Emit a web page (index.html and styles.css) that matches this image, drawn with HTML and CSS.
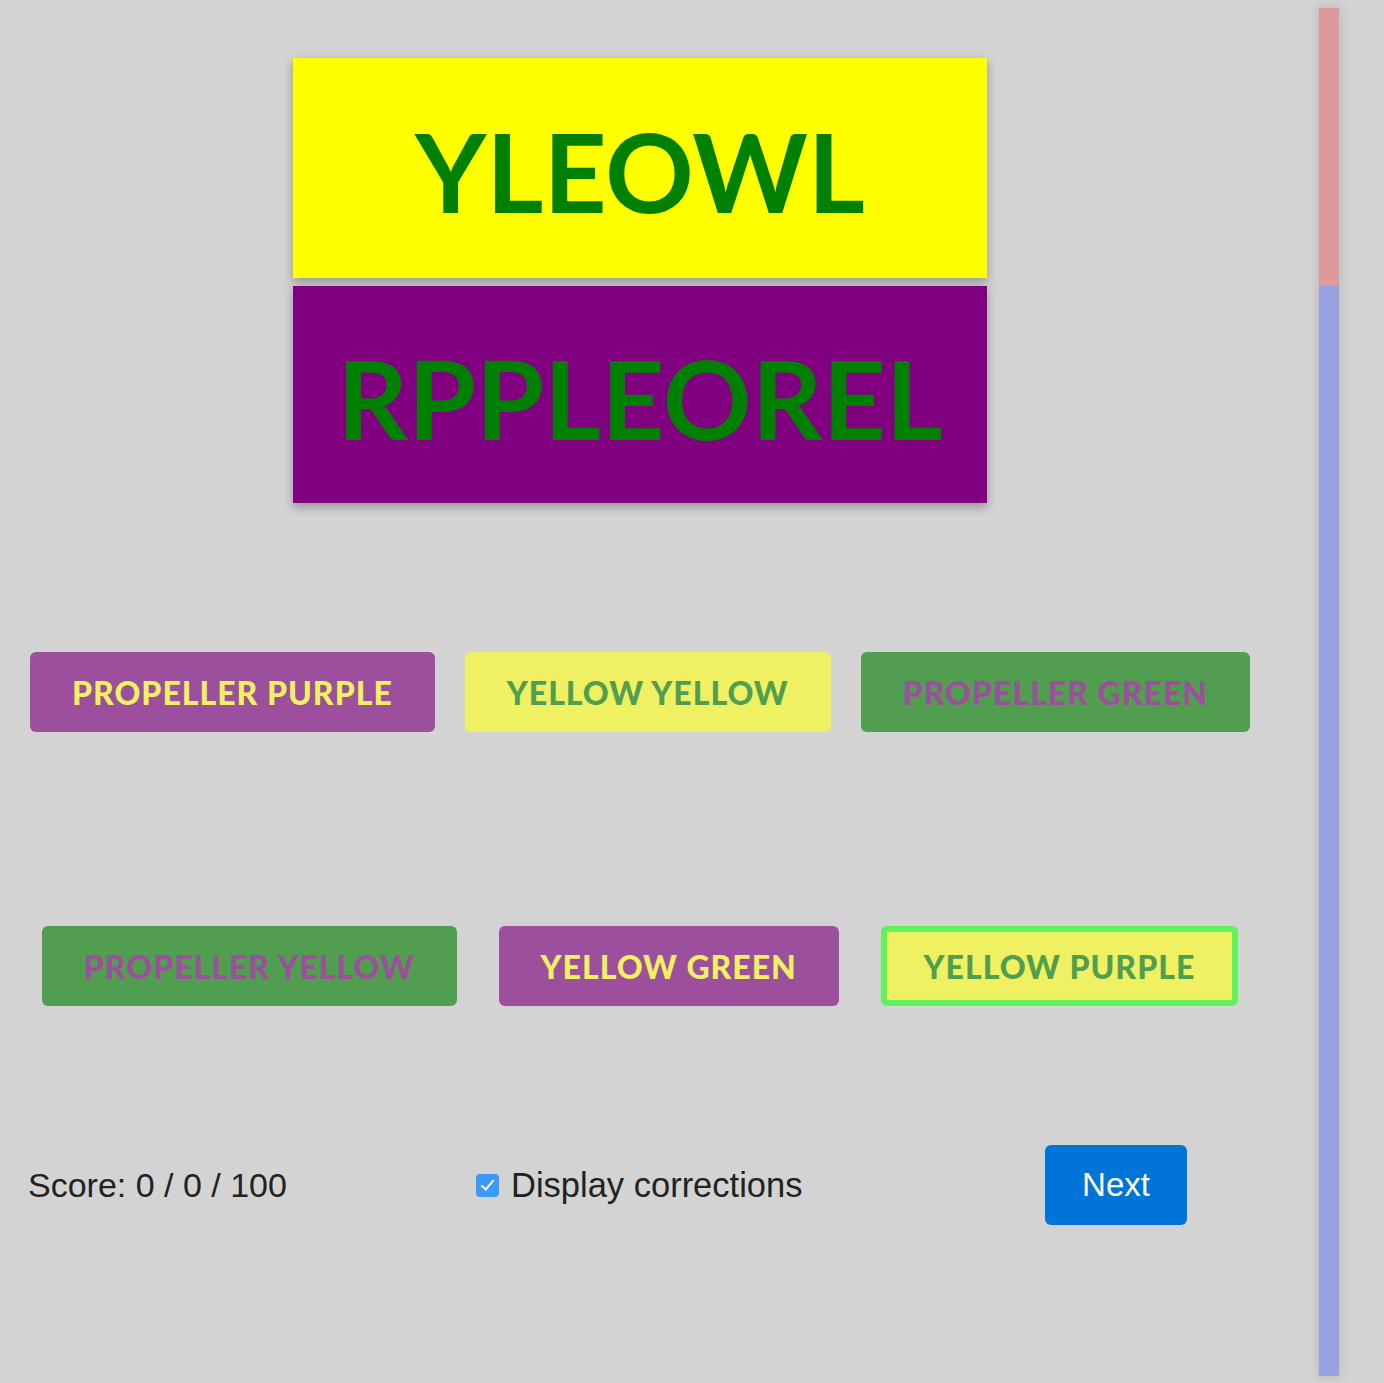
FILE: index.html
```html
<!DOCTYPE html>
<html lang="en">
  <head>
    <meta charset="UTF-8" />
    <meta name="viewport" content="width=device-width, initial-scale=1.0" />
    <title>Color Words</title>
    <link rel="stylesheet" href="styles.css">
  </head>
  <body>
    <div class="game">
      <div class="cards">
        <div class="card card-yellow">YLEOWL</div>
        <div class="card card-purple">RPPLEOREL</div>
      </div>

      <div class="choices choices-top">
        <button class="choice bg-purple fg-yellow">PROPELLER PURPLE</button>
        <button class="choice bg-yellow fg-green">YELLOW YELLOW</button>
        <button class="choice bg-green fg-purple">PROPELLER GREEN</button>
      </div>

      <div class="choices choices-bottom">
        <button class="choice bg-green fg-purple">PROPELLER YELLOW</button>
        <button class="choice bg-purple fg-yellow">YELLOW GREEN</button>
        <button class="choice bg-yellow fg-green correct">YELLOW PURPLE</button>
      </div>

      <div class="footer">
        <p class="score">Score: 0 / 0 / 100</p>
        <label class="corrections">
          <input type="checkbox" checked />
          Display corrections
        </label>
        <button class="next-btn">Next</button>
      </div>
    </div>

    <div class="timer">
      <div class="timer-used" style="height: 20.3%"></div>
    </div>
  </body>
</html>
```

FILE: styles.css
```css
* {
  box-sizing: border-box;
}
body {
  margin: 0;
  background: #d3d3d3;
  color: #222;
  font-family: "Liberation Sans", Arial, sans-serif;
}
.game {
  width: 1280px;
  padding-top: 58px;
}
.cards {
  display: flex;
  flex-direction: column;
  align-items: center;
  gap: 8px;
}
.card {
  width: 694px;
  display: flex;
  align-items: center;
  justify-content: center;
  padding-top: 4px;
  font-family: Lato, sans-serif;
  font-weight: 700;
  font-size: 110px;
  line-height: 1;
  color: #008000;
  box-shadow: 0 4px 10px rgba(0, 0, 0, 0.3);
}
.card-yellow {
  height: 220px;
  background: #ffff00;
}
.card-purple {
  height: 217px;
  background: #800080;
}
.choices {
  display: flex;
  justify-content: space-evenly;
}
.choices-top {
  margin-top: 149px;
}
.choices-bottom {
  margin-top: 194px;
}
.choice {
  height: 80px;
  padding: 0 42px;
  border: none;
  border-radius: 6px;
  font-family: Lato, sans-serif;
  font-weight: 900;
  font-size: 32px;
  letter-spacing: 1px;
  cursor: pointer;
}
.choice.correct {
  border: 6px solid #5ef25e;
  padding: 0 37px;
}
.bg-purple {
  background: #9c4f9c;
}
.bg-yellow {
  background: #eff062;
}
.bg-green {
  background: #519e51;
}
.fg-purple {
  color: #9c4f9c;
}
.fg-yellow {
  color: #eff062;
}
.fg-green {
  color: #519e51;
}
.footer {
  display: grid;
  grid-template-columns: 446px 571px auto;
  align-items: center;
  padding-left: 28px;
  margin-top: 139px;
}
.score {
  margin: 0;
  font-size: 34px;
}
.corrections {
  display: flex;
  align-items: center;
  gap: 12px;
  font-size: 34.5px;
}
.corrections input {
  appearance: none;
  position: relative;
  width: 23px;
  height: 23px;
  margin: 0 0 0 2px;
  border-radius: 4px;
  background: #3b99fc;
}
.corrections input:checked::after {
  content: "";
  position: absolute;
  left: 8px;
  top: 3px;
  width: 5px;
  height: 11px;
  border: solid white;
  border-width: 0 2px 2px 0;
  transform: rotate(40deg);
}
.next-btn {
  width: 142px;
  height: 80px;
  border: none;
  border-radius: 6px;
  background: #0074d9;
  color: white;
  font-family: "Liberation Sans", Arial, sans-serif;
  font-size: 33px;
  cursor: pointer;
}
.timer {
  position: fixed;
  top: 8px;
  bottom: 7px;
  left: 1319px;
  width: 20px;
  background: #99a0e0;
  box-shadow: 0 0 12px rgba(0, 0, 0, 0.15);
}
.timer-used {
  background: #e0999b;
}
```
